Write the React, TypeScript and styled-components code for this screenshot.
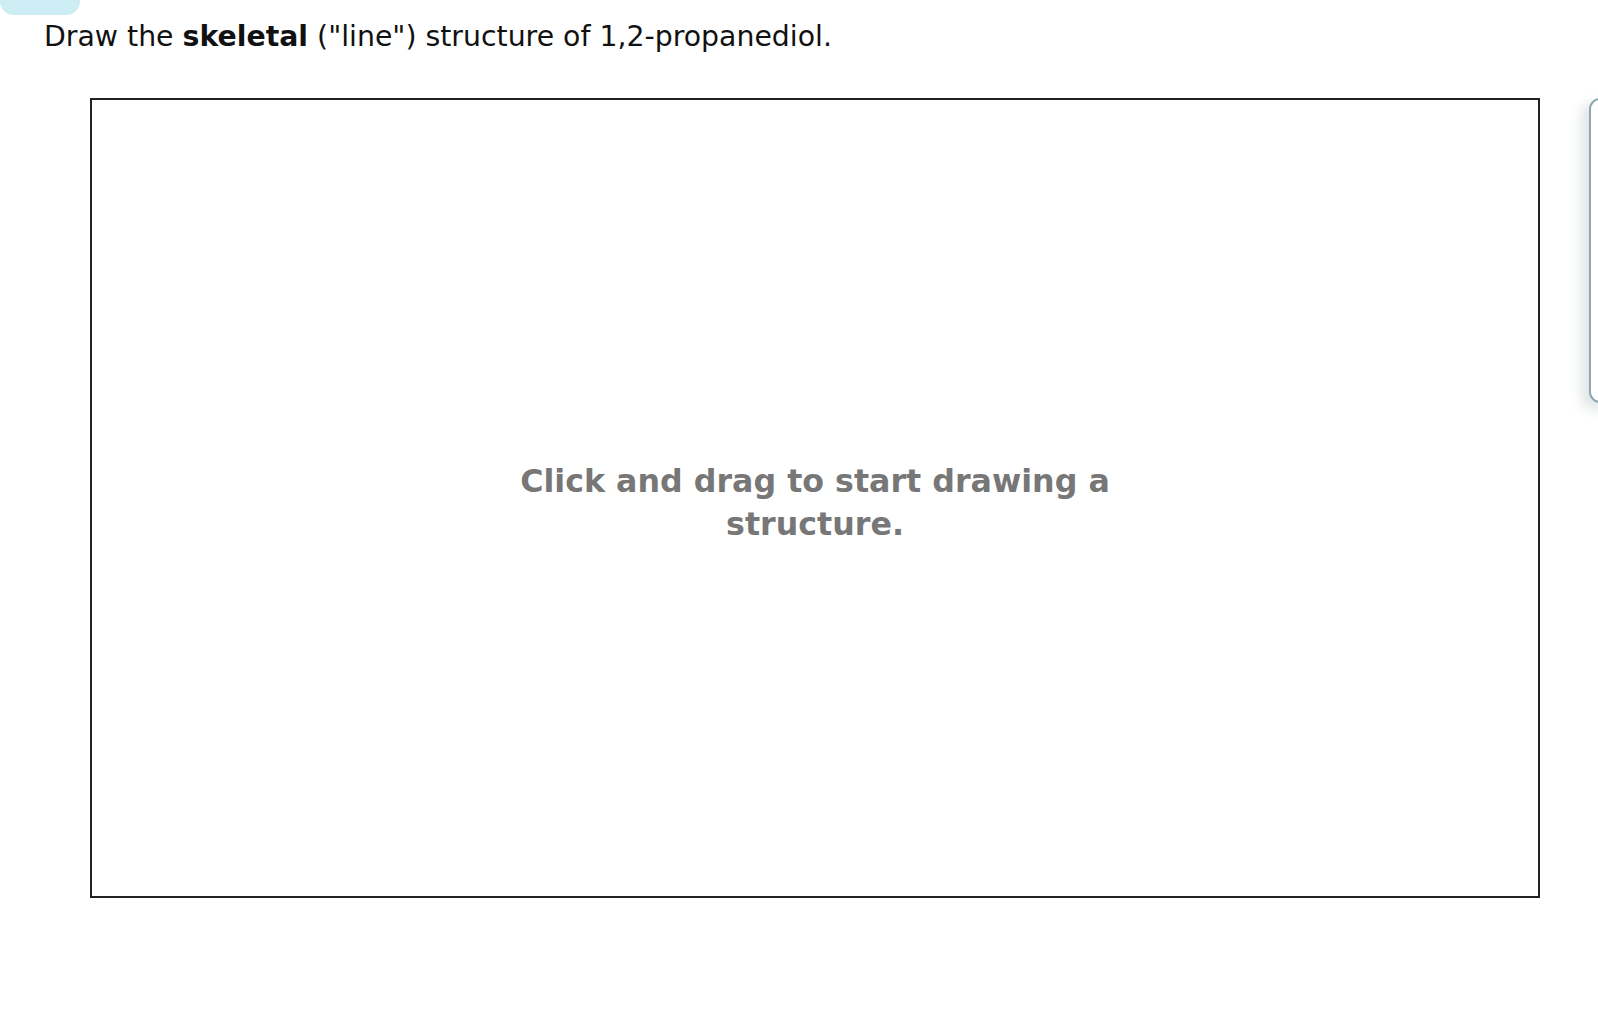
import styled, { createGlobalStyle } from 'styled-components';

const Global = createGlobalStyle`
  html, body {
    margin: 0;
    padding: 0;
    background: #ffffff;
    overflow: hidden;
  }
  body {
    font-family: Verdana, "DejaVu Sans", sans-serif;
    color: #000;
  }
`;

const Page = styled.div`
  width: 1598px;
  height: 1019px;
  display: flex;
  flex-direction: column;
  overflow: hidden;
`;

const Tab = styled.div`
  width: 80px;
  height: 15px;
  background: #cbedf3;
  border-radius: 0 0 14px 14px;
`;

const Question = styled.p`
  margin: 5px 0 0 44px;
  font-size: 28.35px;
  line-height: 34px;
  color: #111;
  b {
    font-weight: bold;
  }
`;

const Workspace = styled.div`
  display: flex;
  align-items: flex-start;
  gap: 49px;
  margin: 44px 0 0 90px;
`;

const Canvas = styled.div`
  flex: none;
  width: 1446px;
  height: 786px;
  border: 2px solid #222;
  display: flex;
  align-items: center;
  justify-content: center;
  padding-top: 10px;
  box-sizing: content-box;
`;

const Hint = styled.div`
  width: 640px;
  text-align: center;
  font-size: 31.7px;
  line-height: 43px;
  font-weight: bold;
  color: #777;
`;

const SidePanel = styled.div`
  flex: none;
  width: 220px;
  height: 301px;
  border: 2px solid #8da6b0;
  border-radius: 11px;
  background: #fff;
  box-shadow: -8px 6px 12px rgba(120, 140, 150, 0.22);
`;

export default function App() {
  return (
    <Page>
      <Global />
      <Tab />
      <Question>
        Draw the <b>skeletal</b> ("line") structure of 1,2-propanediol.
      </Question>
      <Workspace>
        <Canvas>
          <Hint>Click and drag to start drawing a structure.</Hint>
        </Canvas>
        <SidePanel />
      </Workspace>
    </Page>
  );
}
